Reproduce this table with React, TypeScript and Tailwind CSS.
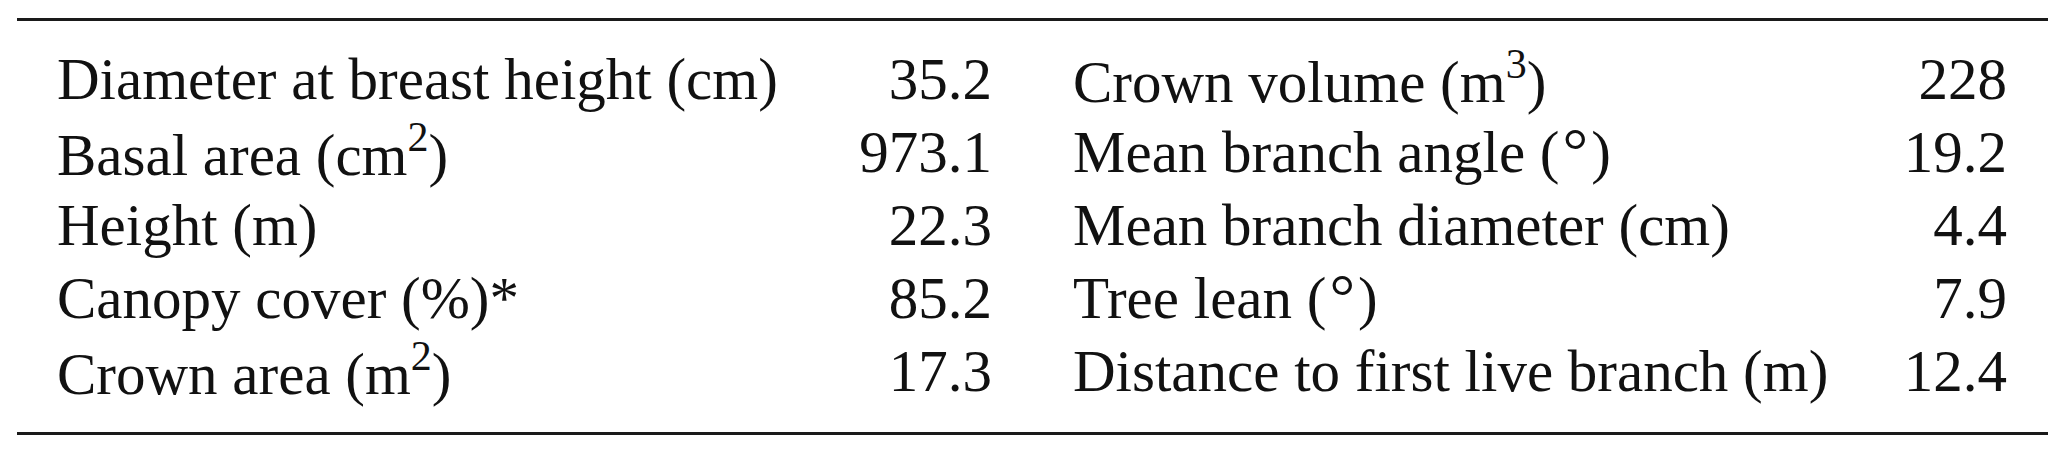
const rows: [React.ReactNode, string, React.ReactNode, string][] = [
  [<>Diameter at breast height (cm)</>, "35.2", <>Crown volume (m<Sup>3</Sup>)</>, "228"],
  [<>Basal area (cm<Sup>2</Sup>)</>, "973.1", <>Mean branch angle (<Deg />)</>, "19.2"],
  [<>Height (m)</>, "22.3", <>Mean branch diameter (cm)</>, "4.4"],
  [<>Canopy cover (%)*</>, "85.2", <>Tree lean (<Deg />)</>, "7.9"],
  [<>Crown area (m<Sup>2</Sup>)</>, "17.3", <>Distance to first live branch (m)</>, "12.4"],
];

function Sup({ children }: { children: React.ReactNode }) {
  return <span className="align-[24px] text-[42px] leading-none">{children}</span>;
}

function Deg() {
  return <span className="px-[3px] text-[64px] leading-none">°</span>;
}

export default function App() {
  return (
    <main
      className="h-[455px] w-[2067px] bg-white text-[#111]"
      style={{ fontFamily: '"Liberation Serif", "Times New Roman", serif' }}
    >
      <div className="ml-[17px] mt-[18px] w-[2031px] border-y-[3px] border-[#1a1a1a] pb-[24px] pt-[22px]">
        <div className="grid grid-cols-[775px_160px_811px_204px] pl-[40px] text-[59px]">
          {rows.map((r, i) => (
            <div key={i} className="contents">
              <div className="h-[73px] whitespace-nowrap leading-[73px]">{r[0]}</div>
              <div className="h-[73px] text-right leading-[73px]">{r[1]}</div>
              <div className="h-[73px] whitespace-nowrap pl-[81px] leading-[73px]">{r[2]}</div>
              <div className="h-[73px] text-right leading-[73px]">{r[3]}</div>
            </div>
          ))}
        </div>
      </div>
    </main>
  );
}
